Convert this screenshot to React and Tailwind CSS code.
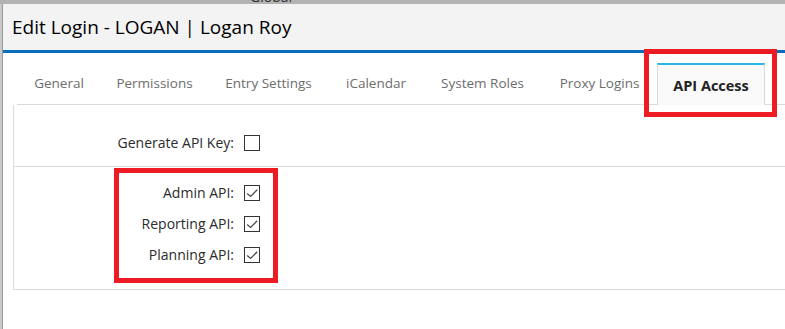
import React from 'react'

const tabs = [
  { label: 'General', w: 'w-[84px]' },
  { label: 'Permissions', w: 'w-[107px]' },
  { label: 'Entry Settings', w: 'w-[121px]' },
  { label: 'iCalendar', w: 'w-[94px]' },
  { label: 'System Roles', w: 'w-[119px]' },
  { label: 'Proxy Logins', w: 'w-[115px]' },
]

function Check({ checked }) {
  return (
    <span className="w-4 h-4 border border-[#333] bg-white flex items-center justify-center">
      {checked && (
        <svg width="14" height="14" viewBox="0 0 14 14" fill="none">
          <path d="M2.2 7.4 L5.6 10.4 L12.2 3.8" stroke="#4a4a4a" strokeWidth="1.3" />
        </svg>
      )}
    </span>
  )
}

function Row({ label, checked }) {
  return (
    <div className="flex items-center h-[31px]">
      <span className="w-[230px] text-right pr-[10px] text-[14px] text-[#2b2b2b]">{label}</span>
      <Check checked={checked} />
    </div>
  )
}

export default function App() {
  return (
    <div className="relative w-[785px] h-[329px] overflow-hidden bg-[#b3b3b3] flex" style={{ fontFamily: '"Open Sans", "Noto Sans", sans-serif' }}>
      {/* background window peeking through */}
      <div className="w-[3px] bg-[#c9c9c9] mt-1 border-r border-[#9a9a9a]" />
      <span className="absolute left-[250px] top-[-11px] text-[14px] leading-[16px] text-[#333]">Global</span>

      <div className="flex-1 mt-1 bg-white flex flex-col">
        {/* header */}
        <div className="h-[49px] bg-[#f3f3f3] border-b-[3px] border-[#0a6ebd] flex items-center pl-[9px] text-[19px] text-black">
          Edit Login - LOGAN | Logan Roy
        </div>

        {/* tabs */}
        <div className="flex mt-[10px] pl-[14px] h-[42px] text-[13.5px]">
          {tabs.map((t) => (
            <div key={t.label} className={`${t.w} flex items-center justify-center text-[#6d6d6d] border-b border-[#dcdcdc]`}>
              {t.label}
            </div>
          ))}
          <div className="w-[108px] flex items-center justify-center text-[14.5px] font-bold text-[#222] bg-[#f9f9f9] border-t-2 border-x border-t-[#2bb5e4] border-x-[#d8d8d8] pt-[2px]">
            API Access
          </div>
          <div className="flex-1 border-b border-[#dcdcdc]" />
        </div>

        {/* panel */}
        <div className="ml-[10px] border-l border-b border-[#dcdcdc] flex flex-col">
          <div className="pt-[22px] pb-2 border-b border-[#dcdcdc]">
            <Row label="Generate API Key:" checked={false} />
          </div>
          <div className="pt-[10px] pb-[19px]">
            <Row label="Admin API:" checked />
            <Row label="Reporting API:" checked />
            <Row label="Planning API:" checked />
          </div>
        </div>
      </div>

      {/* highlight boxes */}
      <div className="absolute left-[114px] top-[168px] w-[164px] h-[115px] border-[5px] border-[#ed1c24]" />
      <div className="absolute left-[644px] top-[49px] w-[133px] h-[68px] border-[5px] border-[#ed1c24]" />
    </div>
  )
}
